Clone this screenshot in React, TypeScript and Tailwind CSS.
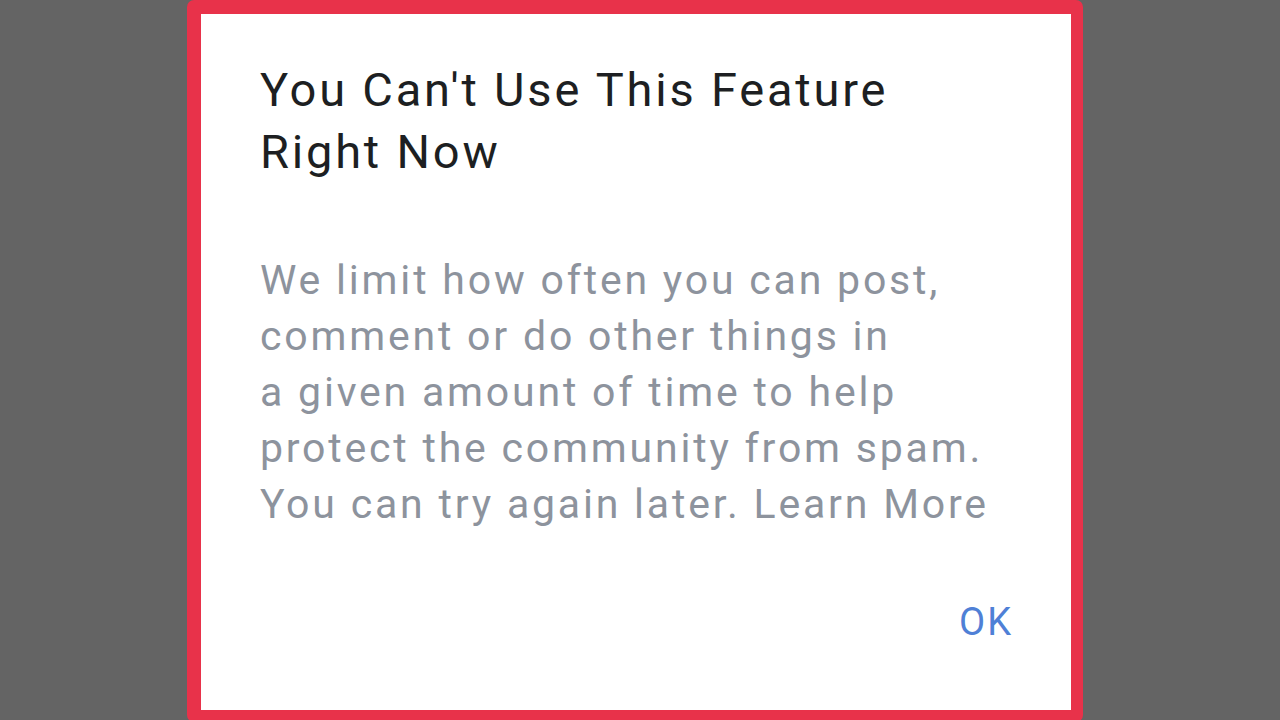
import React from "react";

export default function App() {
  return (
    <div className="w-[1280px] h-[720px] bg-[#646464] flex justify-center overflow-hidden">
      <div className="w-[896px] h-[722px] ml-[-10px] bg-white border-[14px] border-r-[12px] border-b-[12px] border-[#e8324a] rounded-[7px] flex flex-col pl-[59px] pr-[40px] pt-[45px]" style={{ fontFamily: "Roboto, 'Noto Sans', sans-serif" }}>
        <h1 className="text-[47px] leading-[62px] tracking-[2.8px] text-[#1d1f22] font-normal whitespace-nowrap">
          You Can't Use This Feature
          <br />
          Right Now
        </h1>
        <p className="mt-[69px] text-[41px] leading-[56px] tracking-[2.8px] text-[#8d939d] whitespace-nowrap">
          We limit how often you can post,
          <br />
          comment or do other things in
          <br />
          a given amount of time to help
          <br />
          protect the community from spam.
          <br />
          You can try again later. Learn More
        </p>
        <div className="flex justify-end mt-[66px] pr-[18px]">
          <button className="text-[38px] leading-[48px] tracking-[2px] text-[#4f80d6]">OK</button>
        </div>
      </div>
    </div>
  );
}
